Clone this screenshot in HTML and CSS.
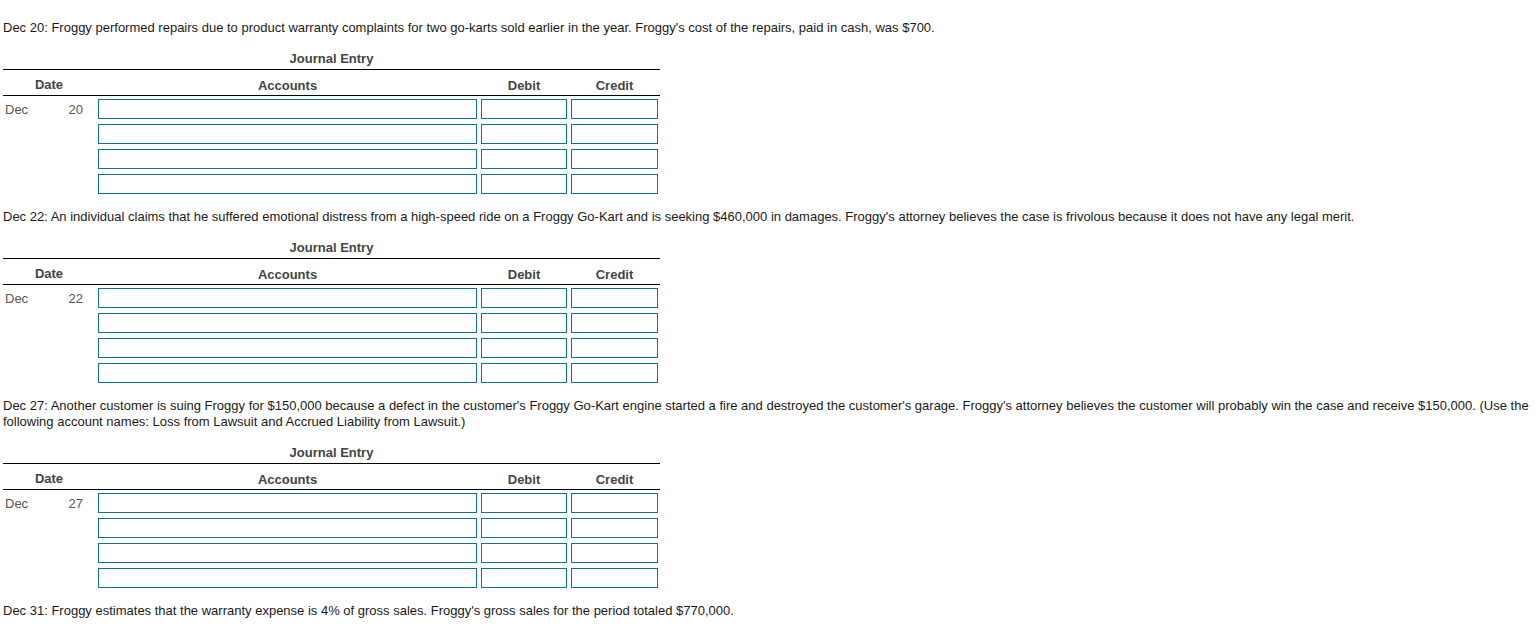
FILE: index.html
```
<!DOCTYPE html>
<html>
<head>
<meta charset="utf-8">
<link rel="stylesheet" href="styles.css">
</head>
<body>
<div class="page">
  <section class="part">
    <p class="prompt">Dec 20: Froggy performed repairs due to product warranty complaints for two go-karts sold earlier in the year. Froggy's cost of the repairs, paid in cash, was $700.</p>
    <div class="je">
      <div class="je-title">Journal Entry</div>
      <div class="je-head">
        <div class="h-date">Date</div>
        <div class="h-acc">Accounts</div>
        <div class="h-deb">Debit</div>
        <div class="h-cred">Credit</div>
      </div>
      <div class="je-rows">
        <div class="row"><div class="date"><span>Dec</span><span>20</span></div><div class="c-acc"><input class="in"></div><div class="c-deb"><input class="in"></div><div class="c-cred"><input class="in"></div></div>
        <div class="row"><div class="date"></div><div class="c-acc"><input class="in"></div><div class="c-deb"><input class="in"></div><div class="c-cred"><input class="in"></div></div>
        <div class="row"><div class="date"></div><div class="c-acc"><input class="in"></div><div class="c-deb"><input class="in"></div><div class="c-cred"><input class="in"></div></div>
        <div class="row"><div class="date"></div><div class="c-acc"><input class="in"></div><div class="c-deb"><input class="in"></div><div class="c-cred"><input class="in"></div></div>
      </div>
    </div>
  </section>

  <section class="part">
    <p class="prompt">Dec 22: An individual claims that he suffered emotional distress from a high-speed ride on a Froggy Go-Kart and is seeking $460,000 in damages. Froggy's attorney believes the case is frivolous because it does not have any legal merit.</p>
    <div class="je">
      <div class="je-title">Journal Entry</div>
      <div class="je-head">
        <div class="h-date">Date</div>
        <div class="h-acc">Accounts</div>
        <div class="h-deb">Debit</div>
        <div class="h-cred">Credit</div>
      </div>
      <div class="je-rows">
        <div class="row"><div class="date"><span>Dec</span><span>22</span></div><div class="c-acc"><input class="in"></div><div class="c-deb"><input class="in"></div><div class="c-cred"><input class="in"></div></div>
        <div class="row"><div class="date"></div><div class="c-acc"><input class="in"></div><div class="c-deb"><input class="in"></div><div class="c-cred"><input class="in"></div></div>
        <div class="row"><div class="date"></div><div class="c-acc"><input class="in"></div><div class="c-deb"><input class="in"></div><div class="c-cred"><input class="in"></div></div>
        <div class="row"><div class="date"></div><div class="c-acc"><input class="in"></div><div class="c-deb"><input class="in"></div><div class="c-cred"><input class="in"></div></div>
      </div>
    </div>
  </section>

  <section class="part">
    <p class="prompt">Dec 27: Another customer is suing Froggy for $150,000 because a defect in the customer's Froggy Go-Kart engine started a fire and destroyed the customer's garage. Froggy's attorney believes the customer will probably win the case and receive $150,000. (Use the following account names: Loss from Lawsuit and Accrued Liability from Lawsuit.)</p>
    <div class="je">
      <div class="je-title">Journal Entry</div>
      <div class="je-head">
        <div class="h-date">Date</div>
        <div class="h-acc">Accounts</div>
        <div class="h-deb">Debit</div>
        <div class="h-cred">Credit</div>
      </div>
      <div class="je-rows">
        <div class="row"><div class="date"><span>Dec</span><span>27</span></div><div class="c-acc"><input class="in"></div><div class="c-deb"><input class="in"></div><div class="c-cred"><input class="in"></div></div>
        <div class="row"><div class="date"></div><div class="c-acc"><input class="in"></div><div class="c-deb"><input class="in"></div><div class="c-cred"><input class="in"></div></div>
        <div class="row"><div class="date"></div><div class="c-acc"><input class="in"></div><div class="c-deb"><input class="in"></div><div class="c-cred"><input class="in"></div></div>
        <div class="row"><div class="date"></div><div class="c-acc"><input class="in"></div><div class="c-deb"><input class="in"></div><div class="c-cred"><input class="in"></div></div>
      </div>
    </div>
  </section>

  <section class="part">
    <p class="prompt">Dec 31: Froggy estimates that the warranty expense is 4% of gross sales. Froggy's gross sales for the period totaled $770,000.</p>
  </section>
</div>
</body>
</html>
```

FILE: styles.css
```
* { box-sizing: border-box; }
html, body { margin: 0; padding: 0; background: #fff; }
body {
  font-family: "Liberation Sans", Arial, sans-serif;
  font-size: 13px;
  color: #1a1a1a;
}
.page {
  padding: 20px 3px 0 3px;
}
.part { margin-bottom: 15px; }
.prompt {
  margin: 0;
  line-height: 16px;
}
.je {
  width: 657px;
  margin-top: 15px;
}
.je-title {
  text-align: center;
  font-weight: bold;
  color: #444;
  line-height: 16px;
  padding-bottom: 2px;
}
.je-head, .row {
  display: grid;
  grid-template-columns: 95px 383px 90px 89px;
}
.je-head {
  border-top: 1px solid #000;
  border-bottom: 1px solid #000;
  padding: 8px 0 1px 0;
  font-weight: bold;
  color: #444;
  line-height: 16px;
}
.h-date { width: 92px; text-align: center; margin-top: -1px; }
.h-acc { width: 379px; text-align: center; }
.h-deb { width: 86px; text-align: center; }
.h-cred { width: 87px; text-align: center; }
.je-rows {
  padding-top: 3px;
  display: flex;
  flex-direction: column;
  gap: 5px;
}
.row { height: 20px; }
.date {
  width: 92px;
  display: flex;
  justify-content: space-between;
  align-items: center;
  padding: 1px 12px 0 2px;
  color: #555;
}
.in {
  display: block;
  height: 20px;
  margin: 0;
  padding: 0 4px;
  border: 1px solid #0b7590;
  border-radius: 0;
  background: #fff;
  font: inherit;
  outline: none;
}
.c-acc .in { width: 379px; }
.c-deb .in { width: 86px; }
.c-cred .in { width: 87px; }
```
